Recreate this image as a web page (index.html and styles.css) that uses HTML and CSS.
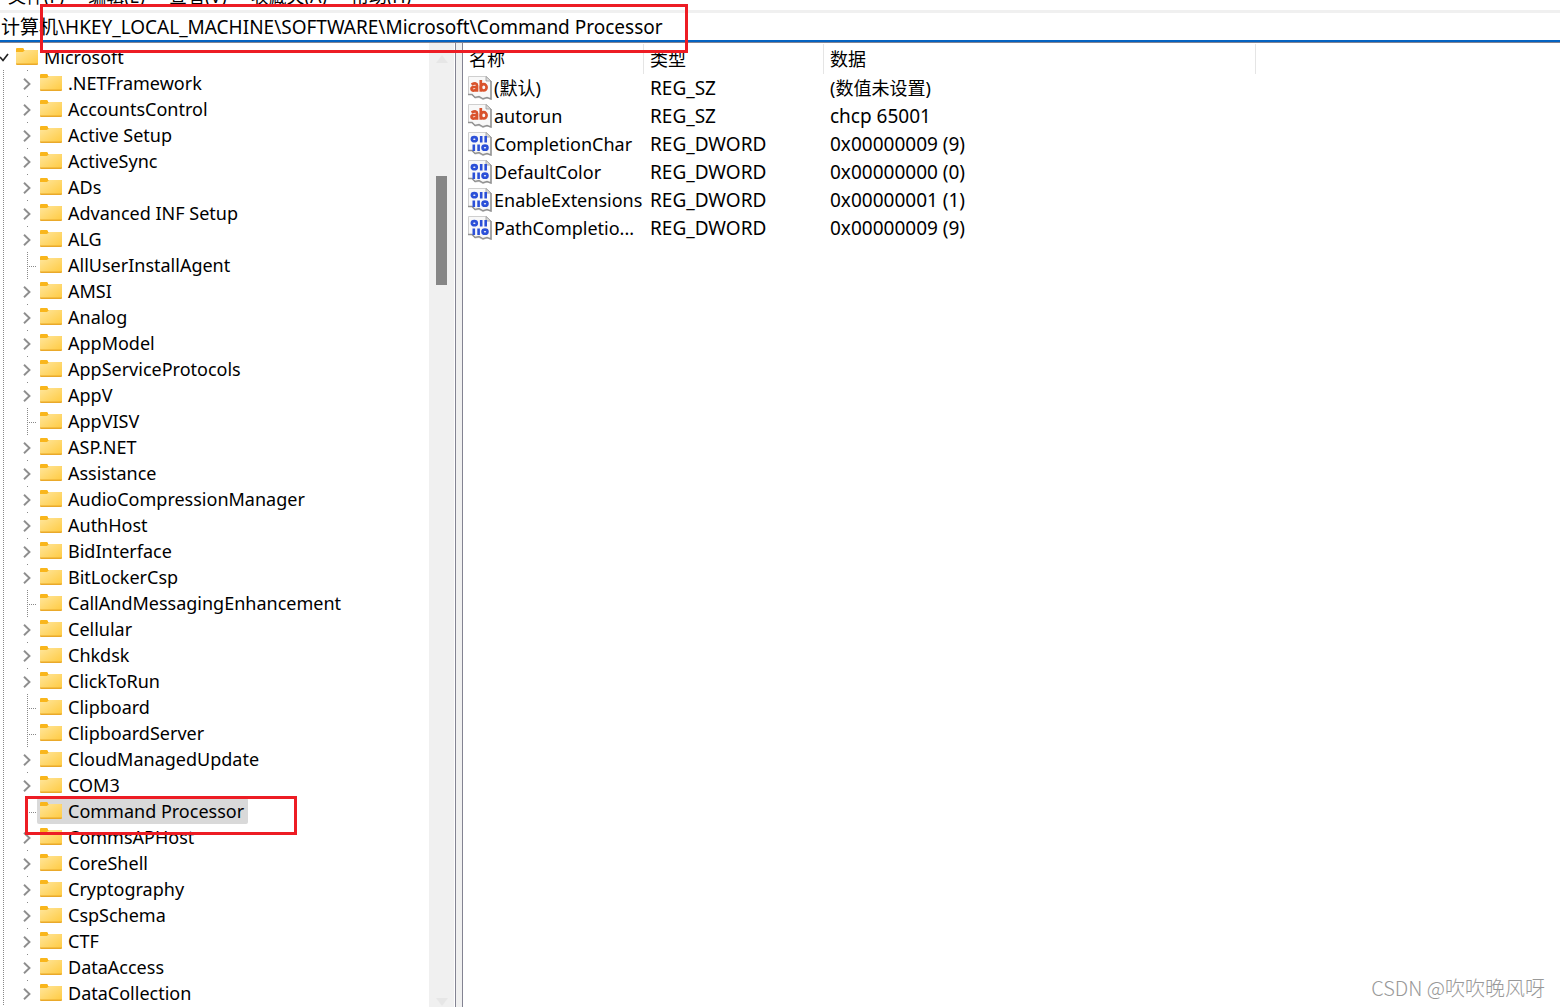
FILE: index.html
```html
<!DOCTYPE html>
<html lang="zh-CN">
<head>
<meta charset="utf-8">
<title>注册表编辑器</title>
<link rel="stylesheet" href="styles.css">
</head>
<body>
<svg class="defs" aria-hidden="true">
  <defs>
    <linearGradient id="fold" x1="0" y1="0" x2="1" y2="1"><stop offset="0" stop-color="#ffe69c"/><stop offset="1" stop-color="#ffcb43"/></linearGradient>
    <symbol id="folder" viewBox="0 0 22 17"><path d="M0 1Q0 0 1 0H7L8 1V2H21Q22 2 22 3V8H0Z" fill="#f9b61c"/><path d="M0 4H7L9 2H21Q22 2 22 3V16H0Z" fill="url(#fold)"/><path d="M0 15.500H22V16Q22 17 21 17H1Q0 17 0 16Z" fill="#eaa92a"/></symbol>
    <symbol id="chev" viewBox="0 0 8 12"><path d="M1 .7L6.500 6L1 11.300" fill="none" stroke="#8e8e8e" stroke-width="1.900"/></symbol>
    <symbol id="sheet" viewBox="0 0 24 24"><path d="M.5 .5H18.500L23 5V23L19 22L15 23.500L11 21.500L7 22L4 18.500H.5Z" fill="#f8f8f8" stroke="#cfcfcf"/><path d="M23 5V23L19 21.500L15 22.800L11 20.500L7 21.500L4 18.500H0" fill="none" stroke="#929292" stroke-width="1.500"/><path d="M18 .5V5H23Z" fill="#ddd" stroke="#999" stroke-width=".8"/></symbol>
    <symbol id="string" viewBox="0 0 24 24"><use href="#sheet"/><g fill="none" stroke="#d9532c" stroke-width="2.700"><path d="M3.500 8.500Q9 6 9 9.500V15.700M9 11H6Q3.500 11 3.500 12.800Q3.500 14.800 6 14.500Q9 14.300 9 11.500"/><path d="M12.800 4V15.700"/><ellipse cx="15.700" cy="11.300" rx="2.900" ry="3.200"/></g></symbol>
    <symbol id="binary" viewBox="0 0 24 24"><use href="#sheet"/><g fill="none" stroke="#2b50d8" stroke-width="2.600"><ellipse cx="6.300" cy="7.200" rx="2.500" ry="2.100"/><path d="M13.200 4V10.400M17.700 4V10.400M5.800 12.500V18.900M10.600 12.500V18.900"/><ellipse cx="17" cy="15.700" rx="2.500" ry="2.100"/></g></symbol>
  </defs>
</svg>
<div class="window">
  <nav class="menubar"><button>文件(F)</button><button>编辑(E)</button><button>查看(V)</button><button>收藏夹(A)</button><button>帮助(H)</button></nav>
  <div class="address">
    <input type="text" aria-label="地址" value="计算机\HKEY_LOCAL_MACHINE\SOFTWARE\Microsoft\Command Processor">
    <span class="mark mark-address"></span>
  </div>
  <main class="panes">
    <div class="tree">
      <div class="root"><button class="toggle" aria-label="折叠"><svg width="9" height="10"><path d="M0 5L3 8.500L8 2" fill="none" stroke="#222" stroke-width="1.700"/></svg></button><svg class="folder"><use href="#folder"/></svg><a href="#">Microsoft</a></div>
      <ul class="keys">
        <li><button class="toggle" aria-label="展开"><svg class="chev"><use href="#chev"/></svg></button><a href="#"><svg class="folder"><use href="#folder"/></svg>.NETFramework</a></li>
        <li><button class="toggle" aria-label="展开"><svg class="chev"><use href="#chev"/></svg></button><a href="#"><svg class="folder"><use href="#folder"/></svg>AccountsControl</a></li>
        <li><button class="toggle" aria-label="展开"><svg class="chev"><use href="#chev"/></svg></button><a href="#"><svg class="folder"><use href="#folder"/></svg>Active Setup</a></li>
        <li><button class="toggle" aria-label="展开"><svg class="chev"><use href="#chev"/></svg></button><a href="#"><svg class="folder"><use href="#folder"/></svg>ActiveSync</a></li>
        <li><button class="toggle" aria-label="展开"><svg class="chev"><use href="#chev"/></svg></button><a href="#"><svg class="folder"><use href="#folder"/></svg>ADs</a></li>
        <li><button class="toggle" aria-label="展开"><svg class="chev"><use href="#chev"/></svg></button><a href="#"><svg class="folder"><use href="#folder"/></svg>Advanced INF Setup</a></li>
        <li><button class="toggle" aria-label="展开"><svg class="chev"><use href="#chev"/></svg></button><a href="#"><svg class="folder"><use href="#folder"/></svg>ALG</a></li>
        <li><span class="leaf"></span><a href="#"><svg class="folder"><use href="#folder"/></svg>AllUserInstallAgent</a></li>
        <li><button class="toggle" aria-label="展开"><svg class="chev"><use href="#chev"/></svg></button><a href="#"><svg class="folder"><use href="#folder"/></svg>AMSI</a></li>
        <li><button class="toggle" aria-label="展开"><svg class="chev"><use href="#chev"/></svg></button><a href="#"><svg class="folder"><use href="#folder"/></svg>Analog</a></li>
        <li><button class="toggle" aria-label="展开"><svg class="chev"><use href="#chev"/></svg></button><a href="#"><svg class="folder"><use href="#folder"/></svg>AppModel</a></li>
        <li><button class="toggle" aria-label="展开"><svg class="chev"><use href="#chev"/></svg></button><a href="#"><svg class="folder"><use href="#folder"/></svg>AppServiceProtocols</a></li>
        <li><button class="toggle" aria-label="展开"><svg class="chev"><use href="#chev"/></svg></button><a href="#"><svg class="folder"><use href="#folder"/></svg>AppV</a></li>
        <li><span class="leaf"></span><a href="#"><svg class="folder"><use href="#folder"/></svg>AppVISV</a></li>
        <li><button class="toggle" aria-label="展开"><svg class="chev"><use href="#chev"/></svg></button><a href="#"><svg class="folder"><use href="#folder"/></svg>ASP.NET</a></li>
        <li><button class="toggle" aria-label="展开"><svg class="chev"><use href="#chev"/></svg></button><a href="#"><svg class="folder"><use href="#folder"/></svg>Assistance</a></li>
        <li><button class="toggle" aria-label="展开"><svg class="chev"><use href="#chev"/></svg></button><a href="#"><svg class="folder"><use href="#folder"/></svg>AudioCompressionManager</a></li>
        <li><button class="toggle" aria-label="展开"><svg class="chev"><use href="#chev"/></svg></button><a href="#"><svg class="folder"><use href="#folder"/></svg>AuthHost</a></li>
        <li><button class="toggle" aria-label="展开"><svg class="chev"><use href="#chev"/></svg></button><a href="#"><svg class="folder"><use href="#folder"/></svg>BidInterface</a></li>
        <li><button class="toggle" aria-label="展开"><svg class="chev"><use href="#chev"/></svg></button><a href="#"><svg class="folder"><use href="#folder"/></svg>BitLockerCsp</a></li>
        <li><span class="leaf"></span><a href="#"><svg class="folder"><use href="#folder"/></svg>CallAndMessagingEnhancement</a></li>
        <li><button class="toggle" aria-label="展开"><svg class="chev"><use href="#chev"/></svg></button><a href="#"><svg class="folder"><use href="#folder"/></svg>Cellular</a></li>
        <li><button class="toggle" aria-label="展开"><svg class="chev"><use href="#chev"/></svg></button><a href="#"><svg class="folder"><use href="#folder"/></svg>Chkdsk</a></li>
        <li><button class="toggle" aria-label="展开"><svg class="chev"><use href="#chev"/></svg></button><a href="#"><svg class="folder"><use href="#folder"/></svg>ClickToRun</a></li>
        <li><span class="leaf"></span><a href="#"><svg class="folder"><use href="#folder"/></svg>Clipboard</a></li>
        <li><span class="leaf"></span><a href="#"><svg class="folder"><use href="#folder"/></svg>ClipboardServer</a></li>
        <li><button class="toggle" aria-label="展开"><svg class="chev"><use href="#chev"/></svg></button><a href="#"><svg class="folder"><use href="#folder"/></svg>CloudManagedUpdate</a></li>
        <li><button class="toggle" aria-label="展开"><svg class="chev"><use href="#chev"/></svg></button><a href="#"><svg class="folder"><use href="#folder"/></svg>COM3</a></li>
        <li><span class="leaf"></span><a href="#" class="selected"><svg class="folder"><use href="#folder"/></svg>Command Processor</a><span class="mark mark-key"></span></li>
        <li><button class="toggle" aria-label="展开"><svg class="chev"><use href="#chev"/></svg></button><a href="#"><svg class="folder"><use href="#folder"/></svg>CommsAPHost</a></li>
        <li><button class="toggle" aria-label="展开"><svg class="chev"><use href="#chev"/></svg></button><a href="#"><svg class="folder"><use href="#folder"/></svg>CoreShell</a></li>
        <li><button class="toggle" aria-label="展开"><svg class="chev"><use href="#chev"/></svg></button><a href="#"><svg class="folder"><use href="#folder"/></svg>Cryptography</a></li>
        <li><button class="toggle" aria-label="展开"><svg class="chev"><use href="#chev"/></svg></button><a href="#"><svg class="folder"><use href="#folder"/></svg>CspSchema</a></li>
        <li><button class="toggle" aria-label="展开"><svg class="chev"><use href="#chev"/></svg></button><a href="#"><svg class="folder"><use href="#folder"/></svg>CTF</a></li>
        <li><button class="toggle" aria-label="展开"><svg class="chev"><use href="#chev"/></svg></button><a href="#"><svg class="folder"><use href="#folder"/></svg>DataAccess</a></li>
        <li><button class="toggle" aria-label="展开"><svg class="chev"><use href="#chev"/></svg></button><a href="#"><svg class="folder"><use href="#folder"/></svg>DataCollection</a></li>
      </ul>
    </div>
    <div class="scrollbar">
      <svg width="12" height="8"><path d="M6 0L12 8H0Z" fill="#e6e6e6"/></svg>
      <div class="track"><div class="thumb"></div></div>
      <svg width="12" height="8"><path d="M6 8L12 0H0Z" fill="#e6e6e6"/></svg>
    </div>
    <div class="splitter"></div>
    <div class="values">
      <table>
        <colgroup><col class="col-name"><col class="col-type"><col class="col-data"><col></colgroup>
        <thead><tr><th>名称</th><th>类型</th><th>数据</th><td></td></tr></thead>
        <tbody>
          <tr><td><div class="name"><svg><use href="#string"/></svg><span>(默认)</span></div></td><td class="code">REG_SZ</td><td>(数值未设置)</td></tr>
          <tr><td><div class="name"><svg><use href="#string"/></svg><span>autorun</span></div></td><td class="code">REG_SZ</td><td class="code">chcp 65001</td></tr>
          <tr><td><div class="name"><svg><use href="#binary"/></svg><span>CompletionChar</span></div></td><td class="code">REG_DWORD</td><td class="code">0x00000009 (9)</td></tr>
          <tr><td><div class="name"><svg><use href="#binary"/></svg><span>DefaultColor</span></div></td><td class="code">REG_DWORD</td><td class="code">0x00000000 (0)</td></tr>
          <tr><td><div class="name"><svg><use href="#binary"/></svg><span>EnableExtensions</span></div></td><td class="code">REG_DWORD</td><td class="code">0x00000001 (1)</td></tr>
          <tr><td><div class="name"><svg><use href="#binary"/></svg><span>PathCompletio...</span></div></td><td class="code">REG_DWORD</td><td class="code">0x00000009 (9)</td></tr>
        </tbody>
      </table>
    </div>
  </main>
  <div class="watermark">CSDN @吹吹晚风呀</div>
</div>
</body>
</html>
```
FILE: styles.css
```css
* { box-sizing: border-box; }

body {
  margin: 0;
  background: #fff;
  color: #000;
  font: 18px/26px "Noto Sans", "Noto Sans CJK SC", sans-serif;
}

button, input {
  margin: 0;
  padding: 0;
  border: 0;
  background: none;
  color: inherit;
  font: inherit;
}

a { color: inherit; text-decoration: none; }

svg { display: block; flex: none; }

.defs { position: absolute; width: 0; height: 0; }

.window {
  position: relative;
  display: flex;
  flex-direction: column;
  height: 100vh;
  overflow: hidden;
}

/* Menu bar, scrolled mostly out of view */
.menubar {
  display: flex;
  align-items: flex-end;
  gap: 24px;
  flex: none;
  height: 13px;
  padding: 0 8px 1px;
  overflow: hidden;
  border-bottom: 3px solid #f0f0f0;
}

.menubar button { flex: none; white-space: nowrap; }

.address {
  position: relative;
  z-index: 2;
  flex: none;
  height: 30px;
  border-bottom: 1px solid #838392;
}

.address input {
  display: block;
  width: 100%;
  height: 29px;
  padding: 0 0 1px 1px;
  border-bottom: 2px solid #0563c1;
  outline: 0;
  font-size: 19px;
}

/* Red annotation frames */
.mark {
  position: absolute;
  z-index: 3;
  border: 3px solid #ed1c24;
  pointer-events: none;
}

.mark-address { left: 40px; top: -9px; width: 648px; height: 49px; }

.mark-key { left: 25px; top: -2px; width: 272px; height: 39px; }

.panes {
  display: grid;
  grid-template-columns: 429px 25px 9px 1fr;
  flex: 1;
  min-height: 0;
}

/* Key tree */
.tree {
  min-height: 0;
  padding-top: 1px;
  overflow: hidden;
  white-space: nowrap;
}

.root { display: flex; align-items: center; height: 26px; }
.root .toggle { width: 16px; }
.root a { padding-left: 6px; }

.folder { width: 22px; height: 17px; margin-bottom: 1px; }

.chev { width: 8px; height: 12px; margin-left: 23px; }

.keys {
  margin: 0;
  padding: 0;
  list-style: none;
  background: repeating-linear-gradient(#888 0 1px, transparent 1px 2px) 3px 0 / 1px 100% no-repeat;
}

.keys li {
  position: relative;
  display: flex;
  align-items: center;
  height: 26px;
  background: linear-gradient(#888, #888) 27px 0 / 1px 1px no-repeat;
}

.keys .toggle, .leaf { flex: none; width: 37px; }

.keys .toggle { padding-top: 2px; }

.leaf {
  height: 26px;
  background:
    repeating-linear-gradient(#888 0 1px, transparent 1px 2px) 27px 0 / 1px 100% no-repeat,
    repeating-linear-gradient(90deg, #888 0 1px, transparent 1px 2px) 29px 14px / 8px 1px no-repeat;
}

.keys a {
  display: flex;
  align-items: center;
  gap: 6px;
  height: 26px;
  padding: 0 4px 0 3px;
}

.keys .selected { background: #d9d9d9; border-radius: 2px; }

.scrollbar {
  display: flex;
  flex-direction: column;
  align-items: center;
  padding: 12px 0 1px;
  background: #f0f0f0;
}

.track { flex: 1; padding-top: 113px; }

.thumb { width: 11px; height: 109px; background: #868686; }

.splitter {
  margin-left: 1px;
  border: solid #838392;
  border-width: 0 1px;
  background: #f0f0f0;
}

/* Value list */
.values { min-width: 0; padding-top: 1px; }

table { width: 100%; border-collapse: separate; border-spacing: 0; table-layout: fixed; }

.col-name { width: 181px; }
.col-type { width: 180px; }
.col-data { width: 432px; }

th, td { padding: 0 0 0 6px; text-align: left; white-space: nowrap; }

th { height: 30px; font-weight: 400; border-right: 1px solid #e5e5e5; }

tbody td { height: 28px; }

tbody td:first-child { padding-left: 5px; }

.code { font-size: 19px; }

.name { display: flex; align-items: center; gap: 2px; }

.name svg { width: 24px; height: 24px; }

.watermark {
  position: absolute;
  right: 15px;
  bottom: 6px;
  color: #999;
  font-size: 20px;
  font-family: "Noto Sans CJK SC", sans-serif;
  font-weight: 300;
}
```
